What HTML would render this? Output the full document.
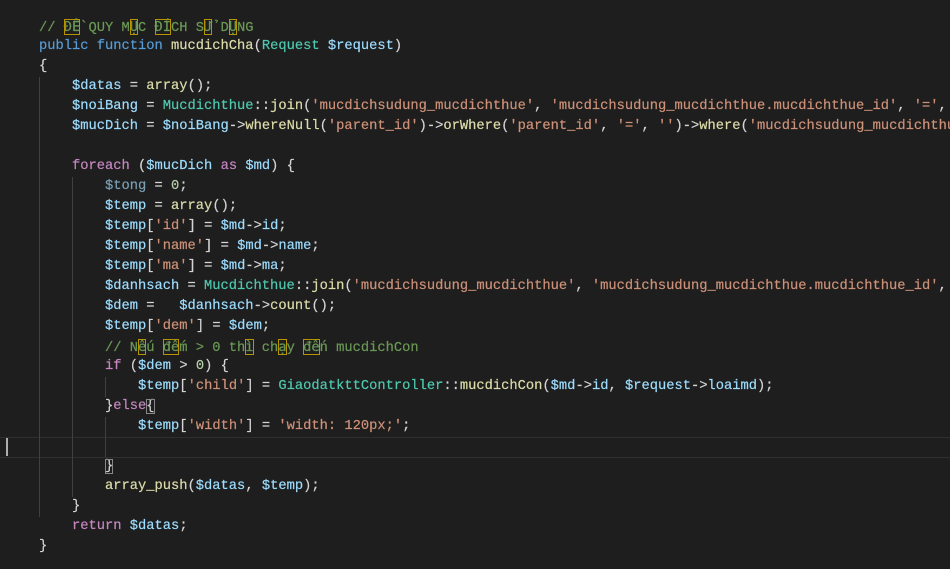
<!DOCTYPE html>
<html><head><meta charset="utf-8">
<style>
html,body{margin:0;padding:0;background:#1e1e1e;width:950px;height:569px;overflow:hidden}
.l{position:absolute;left:39px;height:20px;line-height:20px;white-space:pre;font-family:"Liberation Mono","DejaVu Sans Mono",monospace;font-size:13.75px;color:#d4d4d4;-webkit-text-stroke:0.2px currentColor}
.c{color:#6a9955}.k{color:#569cd6}.f{color:#dcdcaa}.t{color:#4ec9b0}.v{color:#9cdcfe}.s{color:#ce9178}.p{color:#c586c0}.n{color:#b5cea8}.d{color:#7a9fb5}
.b{outline:1px solid #b89500;outline-offset:-1px;font-family:"DejaVu Sans Mono",monospace;font-size:13.7px}
.g{position:absolute;width:1px;background:#404040}
.bb{outline:1px solid #888;outline-offset:-1px}
</style></head><body>
<div style="position:absolute;left:0;top:437px;width:950px;height:19px;border-top:1px solid #2f2f2f;border-bottom:1px solid #2f2f2f"></div>
<div style="position:absolute;left:6px;top:438px;width:2px;height:18px;background:#aeafad"></div>
<div class="g" style="left:39px;top:77px;height:440px"></div>
<div class="g" style="left:72px;top:177px;height:320px"></div>
<div class="g" style="left:105px;top:377px;height:20px"></div>
<div class="g" style="left:105px;top:417px;height:40px"></div>

<div class="l c" style="top:17px">// <span class="b">&#272;&#7872;</span> QUY M<span class="b">&#7908;</span>C <span class="b">&#272;&#205;</span>CH S<span class="b">&#7916;</span> D<span class="b">&#7908;</span>NG</div>
<div class="l" style="top:37px"><span class="k">public function</span> <span class="f">mucdichCha</span>(<span class="t">Request</span> <span class="v">$request</span>)</div>
<div class="l" style="top:57px">{</div>
<div class="l" style="top:77px">    <span class="v">$datas</span> = <span class="f">array</span>();</div>
<div class="l" style="top:97px">    <span class="v">$noiBang</span> = <span class="t">Mucdichthue</span>::<span class="f">join</span>(<span class="s">'mucdichsudung_mucdichthue'</span>, <span class="s">'mucdichsudung_mucdichthue.mucdichthue_id'</span>, <span class="s">'='</span>, <span class="v">$x</span></div>
<div class="l" style="top:117px">    <span class="v">$mucDich</span> = <span class="v">$noiBang</span>-&gt;<span class="f">whereNull</span>(<span class="s">'parent_id'</span>)-&gt;<span class="f">orWhere</span>(<span class="s">'parent_id'</span>, <span class="s">'='</span>, <span class="s">''</span>)-&gt;<span class="f">where</span>(<span class="s">'mucdichsudung_mucdichthue</span></div>
<div class="l" style="top:157px">    <span class="p">foreach</span> (<span class="v">$mucDich</span> <span class="p">as</span> <span class="v">$md</span>) {</div>
<div class="l" style="top:177px">        <span class="d">$tong</span> = <span class="n">0</span>;</div>
<div class="l" style="top:197px">        <span class="v">$temp</span> = <span class="f">array</span>();</div>
<div class="l" style="top:217px">        <span class="v">$temp</span>[<span class="s">'id'</span>] = <span class="v">$md</span>-&gt;<span class="v">id</span>;</div>
<div class="l" style="top:237px">        <span class="v">$temp</span>[<span class="s">'name'</span>] = <span class="v">$md</span>-&gt;<span class="v">name</span>;</div>
<div class="l" style="top:257px">        <span class="v">$temp</span>[<span class="s">'ma'</span>] = <span class="v">$md</span>-&gt;<span class="v">ma</span>;</div>
<div class="l" style="top:277px">        <span class="v">$danhsach</span> = <span class="t">Mucdichthue</span>::<span class="f">join</span>(<span class="s">'mucdichsudung_mucdichthue'</span>, <span class="s">'mucdichsudung_mucdichthue.mucdichthue_id'</span>, <span class="s">'='</span></div>
<div class="l" style="top:297px">        <span class="v">$dem</span> =   <span class="v">$danhsach</span>-&gt;<span class="f">count</span>();</div>
<div class="l" style="top:317px">        <span class="v">$temp</span>[<span class="s">'dem'</span>] = <span class="v">$dem</span>;</div>
<div class="l c" style="top:337px">        // N<span class="b">&#7871;</span>u <span class="b">&#273;&#7871;</span>m &gt; 0 th<span class="b">&#236;</span> ch<span class="b">&#7841;</span>y <span class="b">&#273;&#7871;</span>n mucdichCon</div>
<div class="l" style="top:357px">        <span class="p">if</span> (<span class="v">$dem</span> &gt; <span class="n">0</span>) {</div>
<div class="l" style="top:377px">            <span class="v">$temp</span>[<span class="s">'child'</span>] = <span class="t">GiaodatkttController</span>::<span class="f">mucdichCon</span>(<span class="v">$md</span>-&gt;<span class="v">id</span>, <span class="v">$request</span>-&gt;<span class="v">loaimd</span>);</div>
<div class="l" style="top:397px">        }<span class="p">else</span><span class="bb">{</span></div>
<div class="l" style="top:417px">            <span class="v">$temp</span>[<span class="s">'width'</span>] = <span class="s">'width: 120px;'</span>;</div>
<div class="l" style="top:457px">        <span class="bb">}</span></div>
<div class="l" style="top:477px">        <span class="f">array_push</span>(<span class="v">$datas</span>, <span class="v">$temp</span>);</div>
<div class="l" style="top:497px">    }</div>
<div class="l" style="top:517px">    <span class="p">return</span> <span class="v">$datas</span>;</div>
<div class="l" style="top:537px">}</div>
</body></html>
